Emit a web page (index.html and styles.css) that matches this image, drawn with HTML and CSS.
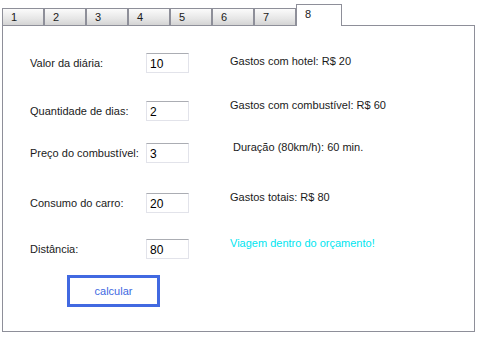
FILE: index.html
```html
<!DOCTYPE html>
<html lang="pt-BR">
<head>
  <meta charset="UTF-8" />
  <title>Viagem</title>
  <link rel="stylesheet" href="styles.css">
</head>
<body>
  <div class="tabs">
    <div class="tab">1</div>
    <div class="tab">2</div>
    <div class="tab">3</div>
    <div class="tab">4</div>
    <div class="tab">5</div>
    <div class="tab">6</div>
    <div class="tab">7</div>
    <div class="tab active">8</div>
  </div>

  <div class="panel">
    <div class="row">
      <label for="diaria">Valor da diária:</label>
      <input type="text" id="diaria" value="10">
      <span class="result first">Gastos com hotel: R$ 20</span>
    </div>
    <div class="row">
      <label for="dias">Quantidade de dias:</label>
      <input type="text" id="dias" value="2">
      <span class="result">Gastos com combustível: R$ 60</span>
    </div>
    <div class="row">
      <label for="preco">Preço do combustível:</label>
      <input type="text" id="preco" value="3">
      <span class="result indent">Duração (80km/h): 60 min.</span>
    </div>
    <div class="row">
      <label for="consumo">Consumo do carro:</label>
      <input type="text" id="consumo" value="20">
      <span class="result">Gastos totais: R$ 80</span>
    </div>
    <div class="row">
      <label for="distancia">Distância:</label>
      <input type="text" id="distancia" value="80">
      <span class="result ok">Viagem dentro do orçamento!</span>
    </div>

    <button id="calcular">calcular</button>
  </div>
</body>
</html>
```

FILE: styles.css
```css
body {
  margin: 0;
  background-color: #fff;
  font-family: "Liberation Sans", Arial, sans-serif;
  font-size: 11px;
  color: #1a1a1a;
}

.tabs {
  display: flex;
  align-items: flex-end;
  height: 21px;
  padding-top: 4px;
  padding-left: 2px;
}

.tab {
  box-sizing: border-box;
  width: 42px;
  height: 17px;
  padding: 2px 0 0 8px;
  border: 1px solid #8e8f99;
  border-bottom: none;
  background: linear-gradient(#fbfbfb, #e6e6e6 60%, #d4d4d4);
  line-height: 13px;
}

.tab.active {
  position: relative;
  z-index: 1;
  width: 46px;
  height: 22px;
  margin-bottom: -1px;
  padding: 3px 0 0 8px;
  background: #fff;
}

.panel {
  box-sizing: border-box;
  width: 473px;
  height: 307px;
  margin-left: 2px;
  padding: 27px 0 0 27px;
  border: 1px solid #8e8f99;
}

.row {
  display: grid;
  grid-template-columns: 116px 84px auto;
  align-items: center;
  height: 20px;
  white-space: nowrap;
}

.row:nth-child(2) { margin-top: 28px; }
.row:nth-child(3) { margin-top: 22px; }
.row:nth-child(4) { margin-top: 30px; }
.row:nth-child(5) { margin-top: 26px; }

label {
  line-height: 13px;
}

input[type="text"] {
  box-sizing: border-box;
  width: 43px;
  height: 20px;
  padding: 2px 3px 0;
  border: 1px solid #e2e3ea;
  border-top-color: #abadb3;
  font-family: inherit;
  font-size: 12px;
  color: #000;
}

.result {
  align-self: start;
  margin-top: -2px;
  line-height: 13px;
}

.result.first {
  margin-top: 2px;
}

.result.indent {
  padding-left: 3px;
}

.result.ok {
  color: #00e5f0;
}

#calcular {
  display: block;
  box-sizing: border-box;
  width: 93px;
  height: 32px;
  margin: 16px 0 0 37px;
  border: 3px solid #4169e1;
  background: #fff;
  font-family: inherit;
  font-size: 11px;
  color: #4169e1;
  cursor: pointer;
}
```
